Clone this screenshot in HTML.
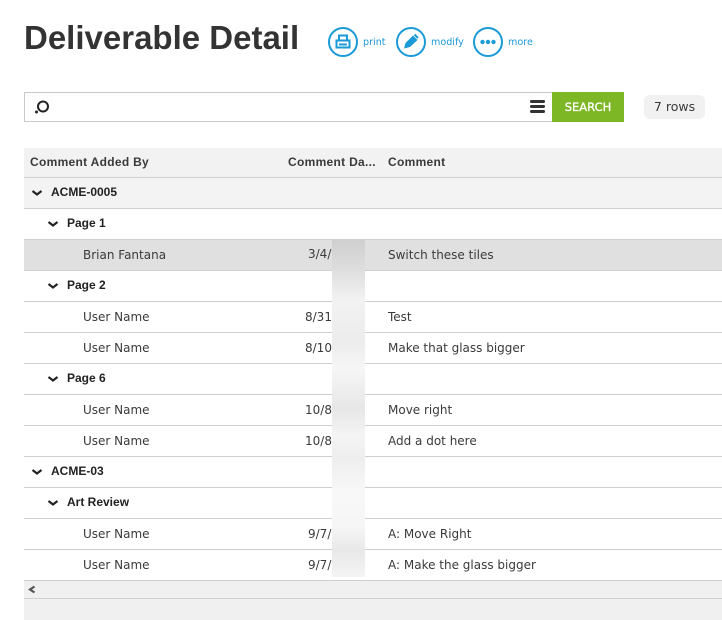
<!DOCTYPE html>
<html><head><meta charset="utf-8"><style>
html,body{margin:0;padding:0;background:#fff;width:722px;height:620px;overflow:hidden}
body{position:relative;font-family:"DejaVu Sans","Liberation Sans",sans-serif;color:#3a3a3a}
.t{position:absolute;white-space:nowrap;line-height:16px;font-size:12px;margin-top:1px}
.b{font:bold 12px/16px "Liberation Sans",sans-serif;color:#222}
.h{font:bold 12px/16px "Liberation Sans",sans-serif;letter-spacing:.3px;color:#3a3a3a}
.l{position:absolute;left:24px;width:698px;height:1px;background:#cfcfcf}
.r{position:absolute;left:24px;width:698px}
.a{position:absolute;color:#1a9ad6;font-size:9.6px;line-height:12px;top:37px;white-space:nowrap}
svg{position:absolute;overflow:visible}
</style></head><body>
<div style="position:absolute;left:24px;top:18px;font:bold 33px/40px 'Liberation Sans',sans-serif;color:#333;white-space:nowrap">Deliverable Detail</div>

<svg style="left:328px;top:27px" width="30" height="30" viewBox="0 0 30 30" fill="none" stroke="#1a9ad6"><circle cx="15" cy="15" r="14" stroke-width="2"/><path d="M11 13.500V8.500h8v5M8.500 13.500h13v7h-13zM11 17.500h8" stroke-width="2"/></svg>
<div class="a" style="left:363px">print</div>
<svg style="left:396px;top:27px" width="30" height="30" viewBox="0 0 30 30" fill="none" stroke="#1a9ad6"><circle cx="15" cy="15" r="14" stroke-width="2"/><path d="M8 21.500l1.500-5.500 7.500-7.500 4.500 4.500-7.500 7z" fill="#1a9ad6" stroke="none"/><path d="M18.500 7.500l3.500 3.500" stroke-width="2"/></svg>
<div class="a" style="left:431px">modify</div>
<svg style="left:473px;top:27px" width="30" height="30" viewBox="0 0 30 30" fill="#1a9ad6"><circle cx="15" cy="15" r="14" fill="none" stroke="#1a9ad6" stroke-width="2"/><circle cx="9.500" cy="15" r="2.200"/><circle cx="15" cy="15" r="2.200"/><circle cx="20.500" cy="15" r="2.200"/></svg>
<div class="a" style="left:508px">more</div>

<div style="position:absolute;left:24px;top:92px;width:527px;height:28px;border:1px solid #c8c8c8"></div>
<svg style="left:34px;top:99px" width="16" height="16" viewBox="0 0 16 16" fill="none"><circle cx="9" cy="7.500" r="5" stroke="#222" stroke-width="2"/><circle cx="2.500" cy="13" r="1.500" fill="#222"/></svg>
<svg style="left:530px;top:100px" width="15" height="14" viewBox="0 0 15 14" fill="#333"><rect y="0" width="15" height="3" rx="1.200"/><rect y="5" width="15" height="3" rx="1.200"/><rect y="10" width="15" height="3" rx="1.200"/></svg>
<div style="position:absolute;left:552px;top:92px;width:72px;height:30px;background:#7db725;color:#fff;font-size:11.5px;line-height:31px;text-align:center;-webkit-text-stroke:.3px #fff">SEARCH</div>
<div style="position:absolute;left:644px;top:95px;width:61px;height:24px;background:#f1f1f1;border-radius:6px;color:#3a3a3a;font-size:12.5px;line-height:24px;text-align:center">7 rows</div>

<div class="r" style="top:148px;height:29px;background:#f2f2f2"></div>
<div class="r" style="top:178px;height:30px;background:#f3f3f3"></div>
<div class="r" style="top:240px;height:30px;background:#e0e0e0"></div>
<div class="r" style="top:581px;height:39px;background:#f0f0f0"></div>
<div class="l" style="top:177px"></div><div class="l" style="top:208px"></div><div class="l" style="top:239px"></div><div class="l" style="top:270px"></div><div class="l" style="top:301px"></div><div class="l" style="top:332px"></div><div class="l" style="top:363px"></div><div class="l" style="top:394px"></div><div class="l" style="top:425px"></div><div class="l" style="top:456px"></div><div class="l" style="top:487px"></div><div class="l" style="top:518px"></div><div class="l" style="top:549px"></div><div class="l" style="top:580px"></div><div class="l" style="top:598px"></div>

<div class="t h" style="left:30px;top:153px">Comment Added By</div>
<div class="t h" style="left:288px;top:153px">Comment Da...</div>
<div class="t h" style="left:388px;top:153px">Comment</div>

<div class="t b" style="left:51px;top:183px">ACME-0005</div>
<div class="t b" style="left:67px;top:214px">Page 1</div>
<div class="t b" style="left:67px;top:276px">Page 2</div>
<div class="t b" style="left:67px;top:369px">Page 6</div>
<div class="t b" style="left:51px;top:462px">ACME-03</div>
<div class="t b" style="left:67px;top:493px">Art Review</div>

<svg style="left:0;top:0" width="722" height="620" fill="none" stroke="#222" stroke-width="2.200"><path d="M32.500 191l4.500 3.500 4.500-3.500M48.500 222l4.500 3.500 4.500-3.500M48.500 284l4.500 3.500 4.500-3.500M48.500 377l4.500 3.500 4.500-3.500M32.500 470l4.500 3.500 4.500-3.500M48.500 501l4.500 3.500 4.500-3.500"/><path d="M34.500 586.500l-4.500 3 4.500 3" stroke="#555"/></svg>

<div class="t" style="left:83px;top:246px">Brian Fantana</div>
<div class="t" style="left:83px;top:308px">User Name</div>
<div class="t" style="left:83px;top:339px">User Name</div>
<div class="t" style="left:83px;top:401px">User Name</div>
<div class="t" style="left:83px;top:432px">User Name</div>
<div class="t" style="left:83px;top:525px">User Name</div>
<div class="t" style="left:83px;top:556px">User Name</div>

<div class="t" style="left:308px;top:245px">3/4/2</div>
<div class="t" style="left:305px;top:308px">8/31/</div>
<div class="t" style="left:305px;top:339px">8/10/</div>
<div class="t" style="left:305px;top:401px">10/8/</div>
<div class="t" style="left:305px;top:432px">10/8/</div>
<div class="t" style="left:308px;top:525px">9/7/2</div>
<div class="t" style="left:308px;top:556px">9/7/2</div>

<div class="t" style="left:388px;top:246px">Switch these tiles</div>
<div class="t" style="left:388px;top:308px">Test</div>
<div class="t" style="left:388px;top:339px">Make that glass bigger</div>
<div class="t" style="left:388px;top:401px">Move right</div>
<div class="t" style="left:388px;top:432px">Add a dot here</div>
<div class="t" style="left:388px;top:525px">A: Move Right</div>
<div class="t" style="left:388px;top:556px">A: Make the glass bigger</div>

<div style="position:absolute;left:332px;top:240px;width:33px;height:337px;background:linear-gradient(180deg,#cfcfcf 0,#dcdcdc 8%,#f2f2f2 18%,#ececec 30%,#f6f6f6 38%,#f0f0f0 43%,#e6e6e6 50%,#f4f4f4 58%,#eeeeee 65%,#f8f8f8 75%,#f6f6f6 85%,#e8e8e8 92%,#f4f4f4 100%)"></div>
</body></html>
